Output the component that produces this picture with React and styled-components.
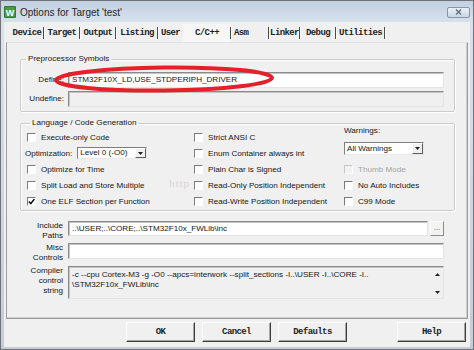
import React from "react"
import styled, { createGlobalStyle } from "styled-components"

const uiFont = `"Liberation Sans", Arial, sans-serif`
const sysFont = `"Liberation Mono", "DejaVu Sans Mono", monospace`

const GlobalStyle = createGlobalStyle`
  html, body {
    margin: 0;
    padding: 0;
    background: #fff;
  }
  * {
    box-sizing: border-box;
  }
`

const Window = styled.div`
  position: relative;
  width: 474px;
  height: 350px;
  display: flex;
  flex-direction: column;
  border: 1px solid #707478;
  background: linear-gradient(#c1d0e3, #d8e2ee 22px, #c4ccd6);
  font-family: ${uiFont};
  font-size: 8.1px;
  color: #151515;
  overflow: hidden;
`

const TitleBar = styled.div`
  height: 21px;
  display: flex;
  align-items: center;
  padding: 1px 3px 0 3px;
  gap: 4px;
`

const TitleText = styled.span`
  flex: 1;
  font-size: 10px;
  color: #262626;
`

const CloseButton = styled.span`
  width: 23px;
  height: 11px;
  border: 1px solid #8896a8;
  border-radius: 2px;
  background: linear-gradient(#e9eff6, #cbd6e3);
  display: flex;
  align-items: center;
  justify-content: center;
`

const Client = styled.div`
  flex: 1;
  display: flex;
  flex-direction: column;
  margin: 0 3px 2px 3px;
  background: #f0f0f0;
`

const TabStrip = styled.div`
  height: 20px;
  display: flex;
  padding: 2px 0 0 6px;
`

const Tab = styled.span`
  position: relative;
  width: ${p => p.$w}px;
  height: 18px;
  line-height: 18px;
  text-align: ${p => p.$align || "center"};
  padding-left: ${p => (p.$align === "left" ? 3 : 0)}px;
  font-family: ${sysFont};
  font-weight: bold;
  font-size: 9px;
  letter-spacing: -0.6px;
  color: #1e1e1e;
  background: ${p => (p.$active ? "#f7f7f7" : "transparent")};

  &::after {
    content: "";
    display: ${p => (p.$noSep ? "none" : "block")};
    position: absolute;
    right: 0;
    top: 3px;
    width: 1px;
    height: 12px;
    background: #4b4b4b;
    box-shadow: 1px 0 0 #fff;
  }
`

const Panel = styled.div`
  flex: 1;
  display: flex;
  flex-direction: column;
  margin: 0 2px 0 2px;
  padding: 0 12px 0 13px;
  border: 1px solid #9c9c9c;
  border-top-color: #e2e2e2;
  box-shadow: inset -1px -1px 0 #cdcdcd;
`

const Group = styled.fieldset`
  margin: ${p => p.$top}px 0 0 0;
  padding: ${p => p.$pad};
  border: 1px solid #cbcbcb;
  border-radius: 2px;
  box-shadow: inset 1px 1px 0 #fff, 1px 1px 0 #fff;
  min-width: 0;
`

const Legend = styled.legend`
  margin-left: 5px;
  padding: 0 2px;
  line-height: 10px;
  font-size: 8.1px;
`

const SymbolGrid = styled.div`
  display: grid;
  grid-template-columns: 43px 1fr;
  column-gap: 4px;
  row-gap: 3px;
  align-items: center;
`

const FieldLabel = styled.span`
  text-align: right;
  line-height: 10px;
  white-space: nowrap;
`

const Field = styled.div`
  height: ${p => p.$h}px;
  line-height: ${p => p.$h - 2}px;
  padding-left: 3px;
  background: ${p => (p.$disabled ? "#f0f0f0" : "#fff")};
  border: 1px solid;
  border-color: #8a8a8a #e4e4e4 #e4e4e4 #8a8a8a;
  box-shadow: inset 1px 1px 0 #c4c4c4;
  white-space: nowrap;
  overflow: hidden;
  flex: 1;
`

const OptionGrid = styled.div`
  display: grid;
  grid-template-columns: 169px 150px 1fr;
  grid-template-rows: repeat(5, 16px);
  grid-auto-flow: column;
`

const CheckLine = styled.div`
  display: flex;
  align-items: center;
  gap: 5px;
  padding-left: ${p => p.$indent || 0}px;
  color: ${p => (p.$disabled ? "#a4a4a4" : "inherit")};
  white-space: nowrap;
`

const Box = styled.span`
  width: 9px;
  height: 9px;
  flex: none;
  display: flex;
  align-items: center;
  justify-content: center;
  background: ${p => (p.$disabled ? "#f2f2f2" : "#fff")};
  border: 1px solid;
  border-color: ${p =>
    p.$disabled ? "#c6c6c6 #fff #fff #c6c6c6" : "#7a7a7a #fff #fff #7a7a7a"};
`

const InlineRow = styled.div`
  display: flex;
  align-items: center;
  gap: 5px;
  white-space: nowrap;
`

const WarnCell = styled.div`
  grid-row: span 2;
  display: flex;
  flex-direction: column;
`

const WarnLabel = styled.span`
  line-height: 10px;
  margin-top: -3px;
`

const SelectBox = styled.div`
  display: flex;
  width: ${p => p.$w}px;
  height: ${p => p.$h}px;
  margin-top: ${p => p.$top || 0}px;
  background: #fff;
  border: 1px solid;
  border-color: #7e7e7e #e8e8e8 #e8e8e8 #7e7e7e;
`

const SelectValue = styled.span`
  flex: 1;
  padding-left: 2px;
  line-height: ${p => p.$h - 2}px;
  white-space: nowrap;
`

const DropButton = styled.span`
  width: 11px;
  display: flex;
  align-items: center;
  justify-content: center;
  background: #f0f0f0;
  border: 1px solid;
  border-color: #fff #5e5e5e #5e5e5e #fff;
`

const PathRows = styled.div`
  display: flex;
  flex-direction: column;
  margin: 10px 11px 0 0;
`

const PathRow = styled.div`
  display: grid;
  grid-template-columns: 43px 1fr;
  column-gap: 5px;
  align-items: start;
  margin-top: ${p => p.$top || 0}px;
`

const FieldWithButton = styled.div`
  display: flex;
  gap: 2px;
`

const DotsButton = styled.span`
  width: 14px;
  height: 15px;
  line-height: 11px;
  text-align: center;
  font-size: 8px;
  color: #555;
  background: #f2f2f2;
  border: 1px solid;
  border-color: #fff #8a8a8a #8a8a8a #fff;
`

const StringArea = styled.div`
  display: flex;
  height: 33px;
  background: #f0f0f0;
  border: 1px solid;
  border-color: #8a8a8a #e4e4e4 #e4e4e4 #8a8a8a;
  box-shadow: inset 1px 1px 0 #c4c4c4;
`

const StringText = styled.div`
  flex: 1;
  padding: 3px 0 0 3px;
  line-height: 10px;
  white-space: nowrap;
  overflow: hidden;
`

const ScrollArrows = styled.div`
  width: 12px;
  display: flex;
  flex-direction: column;
  justify-content: space-between;
  align-items: center;
  padding: 6px 0 4px;
`

const ButtonRow = styled.div`
  height: 28px;
  display: flex;
  justify-content: flex-end;
  align-items: flex-start;
  gap: 7px;
  padding: 3px 4px 0 0;
`

const DialogButton = styled.span`
  width: 69px;
  height: 20px;
  line-height: 18px;
  margin-left: ${p => p.$gap || 0}px;
  text-align: center;
  font-family: ${sysFont};
  font-weight: bold;
  font-size: 9px;
  letter-spacing: -0.6px;
  color: #1e1e1e;
  background: #f0f0f0;
  border: 1px solid;
  border-color: #fff #3e3e3e #3e3e3e #fff;
  box-shadow: inset -1px -1px 0 #a6a6a6;
`

const Watermark = styled.span`
  position: absolute;
  left: 168px;
  top: 176px;
  font-family: "Liberation Serif", serif;
  font-size: 11px;
  color: #d6d6d6;
  letter-spacing: 1px;
  pointer-events: none;
`

const Annotation = styled.svg`
  position: absolute;
  left: 51px;
  top: 61px;
  pointer-events: none;
`

const Triangle = ({ up }) => (
  <svg width="5" height="3" viewBox="0 0 5 3">
    <path d={up ? "M0 3 L2.5 0 L5 3 Z" : "M0 0 L5 0 L2.5 3 Z"} fill="#222" />
  </svg>
)

const Select = ({ w, h, top, value }) => (
  <SelectBox $w={w} $h={h} $top={top}>
    <SelectValue $h={h}>{value}</SelectValue>
    <DropButton>
      <Triangle />
    </DropButton>
  </SelectBox>
)

const Check = ({ label, checked, disabled, indent }) => (
  <CheckLine $disabled={disabled} $indent={indent}>
    <Box $disabled={disabled}>
      {checked && (
        <svg width="7" height="7" viewBox="0 0 7 7">
          <path d="M0.8 3.4 L2.8 5.5 L6.4 1" stroke="#111" strokeWidth="1.5" fill="none" />
        </svg>
      )}
    </Box>
    {label}
  </CheckLine>
)

const tabs = [
  { label: "Device", w: 34 },
  { label: "Target", w: 36 },
  { label: "Output", w: 36 },
  { label: "Listing", w: 42 },
  { label: "User", w: 25, noSep: true },
  { label: "C/C++", w: 48, active: true },
  { label: "Asm", w: 38, align: "left" },
  { label: "Linker", w: 31 },
  { label: "Debug", w: 36 },
  { label: "Utilities", w: 49 },
]

export default function App() {
  return (
    <>
      <GlobalStyle />
      <Window>
        <TitleBar>
          <svg width="12" height="12" viewBox="0 0 12 12">
            <rect x="0" y="0" width="12" height="12" rx="1" fill="#2f7d33" />
            <rect x="1" y="1" width="10" height="10" fill="#4a9a3c" />
            <text x="6" y="9.6" textAnchor="middle" fontSize="9" fontWeight="bold" fontFamily="Liberation Sans" fill="#fff">W</text>
          </svg>
          <TitleText>Options for Target 'test'</TitleText>
          <CloseButton>
            <svg width="7" height="6" viewBox="0 0 7 6">
              <path d="M1 0.5 L6 5.5 M6 0.5 L1 5.5" stroke="#5b6b80" strokeWidth="1.2" />
            </svg>
          </CloseButton>
        </TitleBar>

        <Client>
          <TabStrip>
            {tabs.map(t => (
              <Tab key={t.label} $w={t.w} $align={t.align} $active={t.active} $noSep={t.noSep}>
                {t.label}
              </Tab>
            ))}
          </TabStrip>

          <Panel>
            <Group $top={11} $pad="8px 10px 4px 0">
              <Legend>Preprocessor Symbols</Legend>
              <SymbolGrid>
                <FieldLabel>Define:</FieldLabel>
                <Field $h={16}>STM32F10X_LD,USE_STDPERIPH_DRIVER</Field>
                <FieldLabel>Undefine:</FieldLabel>
                <Field $h={16} $disabled />
              </SymbolGrid>
            </Group>

            <Group $top={6} $pad="1px 10px 1px 4px">
              <Legend>Language / Code Generation</Legend>
              <OptionGrid>
                <Check indent={2} label="Execute-only Code" />
                <InlineRow>
                  Optimization:
                  <Select w={70} h={12} value="Level 0 (-O0)" />
                </InlineRow>
                <Check indent={2} label="Optimize for Time" />
                <Check indent={2} label="Split Load and Store Multiple" />
                <Check indent={2} label="One ELF Section per Function" checked />

                <Check label="Strict ANSI C" />
                <Check label="Enum Container always int" />
                <Check label="Plain Char is Signed" />
                <Check label="Read-Only Position Independent" />
                <Check label="Read-Write Position Independent" />

                <WarnCell>
                  <WarnLabel>Warnings:</WarnLabel>
                  <Select w={80} h={13} top={6} value="All Warnings" />
                </WarnCell>
                <Check label="Thumb Mode" disabled />
                <Check label="No Auto Includes" />
                <Check label="C99 Mode" />
              </OptionGrid>
            </Group>

            <PathRows>
              <PathRow>
                <FieldLabel>Include<br />Paths</FieldLabel>
                <FieldWithButton>
                  <Field $h={15}>..\USER;..\CORE;..\STM32F10x_FWLib\inc</Field>
                  <DotsButton>...</DotsButton>
                </FieldWithButton>
              </PathRow>
              <PathRow $top={2}>
                <FieldLabel>Misc<br />Controls</FieldLabel>
                <Field $h={16} />
              </PathRow>
              <PathRow $top={3}>
                <FieldLabel>Compiler<br />control<br />string</FieldLabel>
                <StringArea>
                  <StringText>
                    -c --cpu Cortex-M3 -g -O0 --apcs=interwork --split_sections -I..\USER -I..\CORE -I..
                    <br />
                    \STM32F10x_FWLib\inc
                  </StringText>
                  <ScrollArrows>
                    <Triangle up />
                    <Triangle />
                  </ScrollArrows>
                </StringArea>
              </PathRow>
            </PathRows>
          </Panel>

          <ButtonRow>
            <DialogButton>OK</DialogButton>
            <DialogButton>Cancel</DialogButton>
            <DialogButton>Defaults</DialogButton>
            <DialogButton $gap={43}>Help</DialogButton>
          </ButtonRow>
        </Client>

        <Watermark>http</Watermark>
        <Annotation width="226" height="34" viewBox="0 0 226 34">
          <ellipse cx="112" cy="17" rx="108" ry="11.5" fill="none" stroke="#e5202b" strokeWidth="4" transform="rotate(-0.6 112 17)" />
        </Annotation>
      </Window>
    </>
  )
}
